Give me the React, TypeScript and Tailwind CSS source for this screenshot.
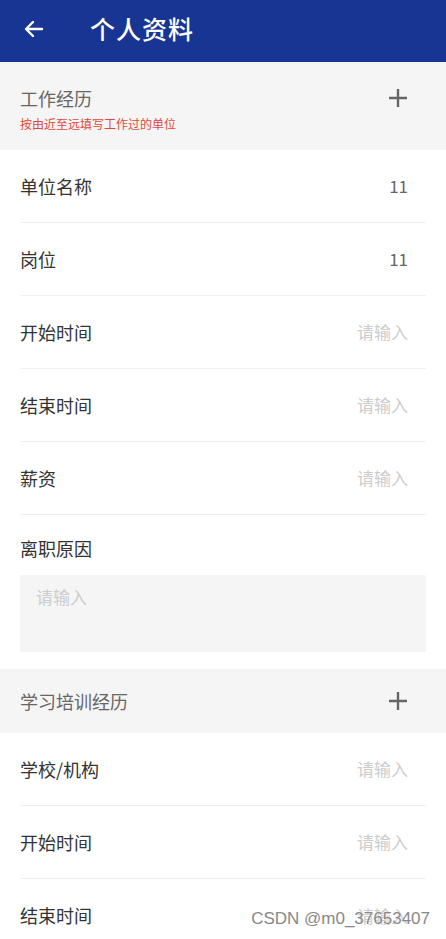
import React from "react"

type Row = { label: string; value?: string }

const work: Row[] = [
  { label: "单位名称", value: "11" },
  { label: "岗位", value: "11" },
  { label: "开始时间" },
  { label: "结束时间" },
  { label: "薪资" },
]

const study: Row[] = [{ label: "学校/机构" }, { label: "开始时间" }, { label: "结束时间" }]

function Plus() {
  return (
    <svg width="20" height="20" viewBox="0 0 20 20" className="text-[#666]">
      <path d="M10 1v18M1 10h18" stroke="currentColor" strokeWidth="2.4" fill="none" />
    </svg>
  )
}

function FieldRow({ row, last }: { row: Row; last?: boolean }) {
  return (
    <div className={last ? "flex h-[73px] items-center pr-[18px]" : "flex h-[73px] items-center border-b border-[#f0f0f0] pr-[18px]"}>
      <span className="flex-1 text-[18px] text-[#333]">{row.label}</span>
      {row.value ? (
        <span className="text-[17px] text-[#666]">{row.value}</span>
      ) : (
        <span className="text-[17px] text-[#cccccc]">请输入</span>
      )}
    </div>
  )
}

export default function App() {
  return (
    <div
      className="relative h-[939px] w-[446px] overflow-hidden bg-white"
      style={{ fontFamily: '"Noto Sans CJK SC", "Noto Sans", sans-serif' }}
    >
      <header className="flex h-[62px] items-center bg-[#183594] px-[22px] text-white">
        <svg width="24" height="24" viewBox="0 0 24 24" className="mt-[-4px]">
          <path d="M20 12H5M11 5l-7 7 7 7" stroke="white" strokeWidth="2.4" fill="none" strokeLinecap="round" strokeLinejoin="round" />
        </svg>
        <h1 className="ml-[44px] mt-[-4px] text-[25px] font-medium tracking-[1px]">个人资料</h1>
      </header>

      <div className="flex h-[88px] items-start justify-between bg-[#f5f5f5] pl-[20px] pr-[38px] pt-[23px]">
        <div>
          <div className="text-[18px] leading-[26px] text-[#666]">工作经历</div>
          <div className="mt-[5px] text-[12px] leading-[16px] text-[#e0483a]">按由近至远填写工作过的单位</div>
        </div>
        <div className="mt-[3px]">
          <Plus />
        </div>
      </div>

      <div className="pl-[20px] pr-[20px]">
        {work.map((r) => (
          <FieldRow key={r.label} row={r} />
        ))}
        <div className="flex h-[60px] items-center pt-[6px] text-[18px] text-[#333]">离职原因</div>
        <div className="h-[77px] bg-[#f5f5f5] px-[16px] pt-[9px] text-[17px] text-[#cccccc]">请输入</div>
      </div>

      <div className="mt-[17px] flex h-[64px] items-center justify-between bg-[#f5f5f5] pl-[20px] pr-[38px]">
        <span className="text-[18px] text-[#666]">学习培训经历</span>
        <Plus />
      </div>

      <div className="pl-[20px] pr-[20px]">
        {study.map((r, i) => (
          <FieldRow key={r.label + i} row={r} last={i === study.length - 1} />
        ))}
      </div>

      <div
        className="absolute right-[16px] top-[907px] text-[17px] leading-[24px] text-[#888]"
        style={{ fontFamily: '"Liberation Sans", Arial, sans-serif', textShadow: "0 0 1px #fff" }}
      >
        CSDN @m0_37653407
      </div>
    </div>
  )
}
